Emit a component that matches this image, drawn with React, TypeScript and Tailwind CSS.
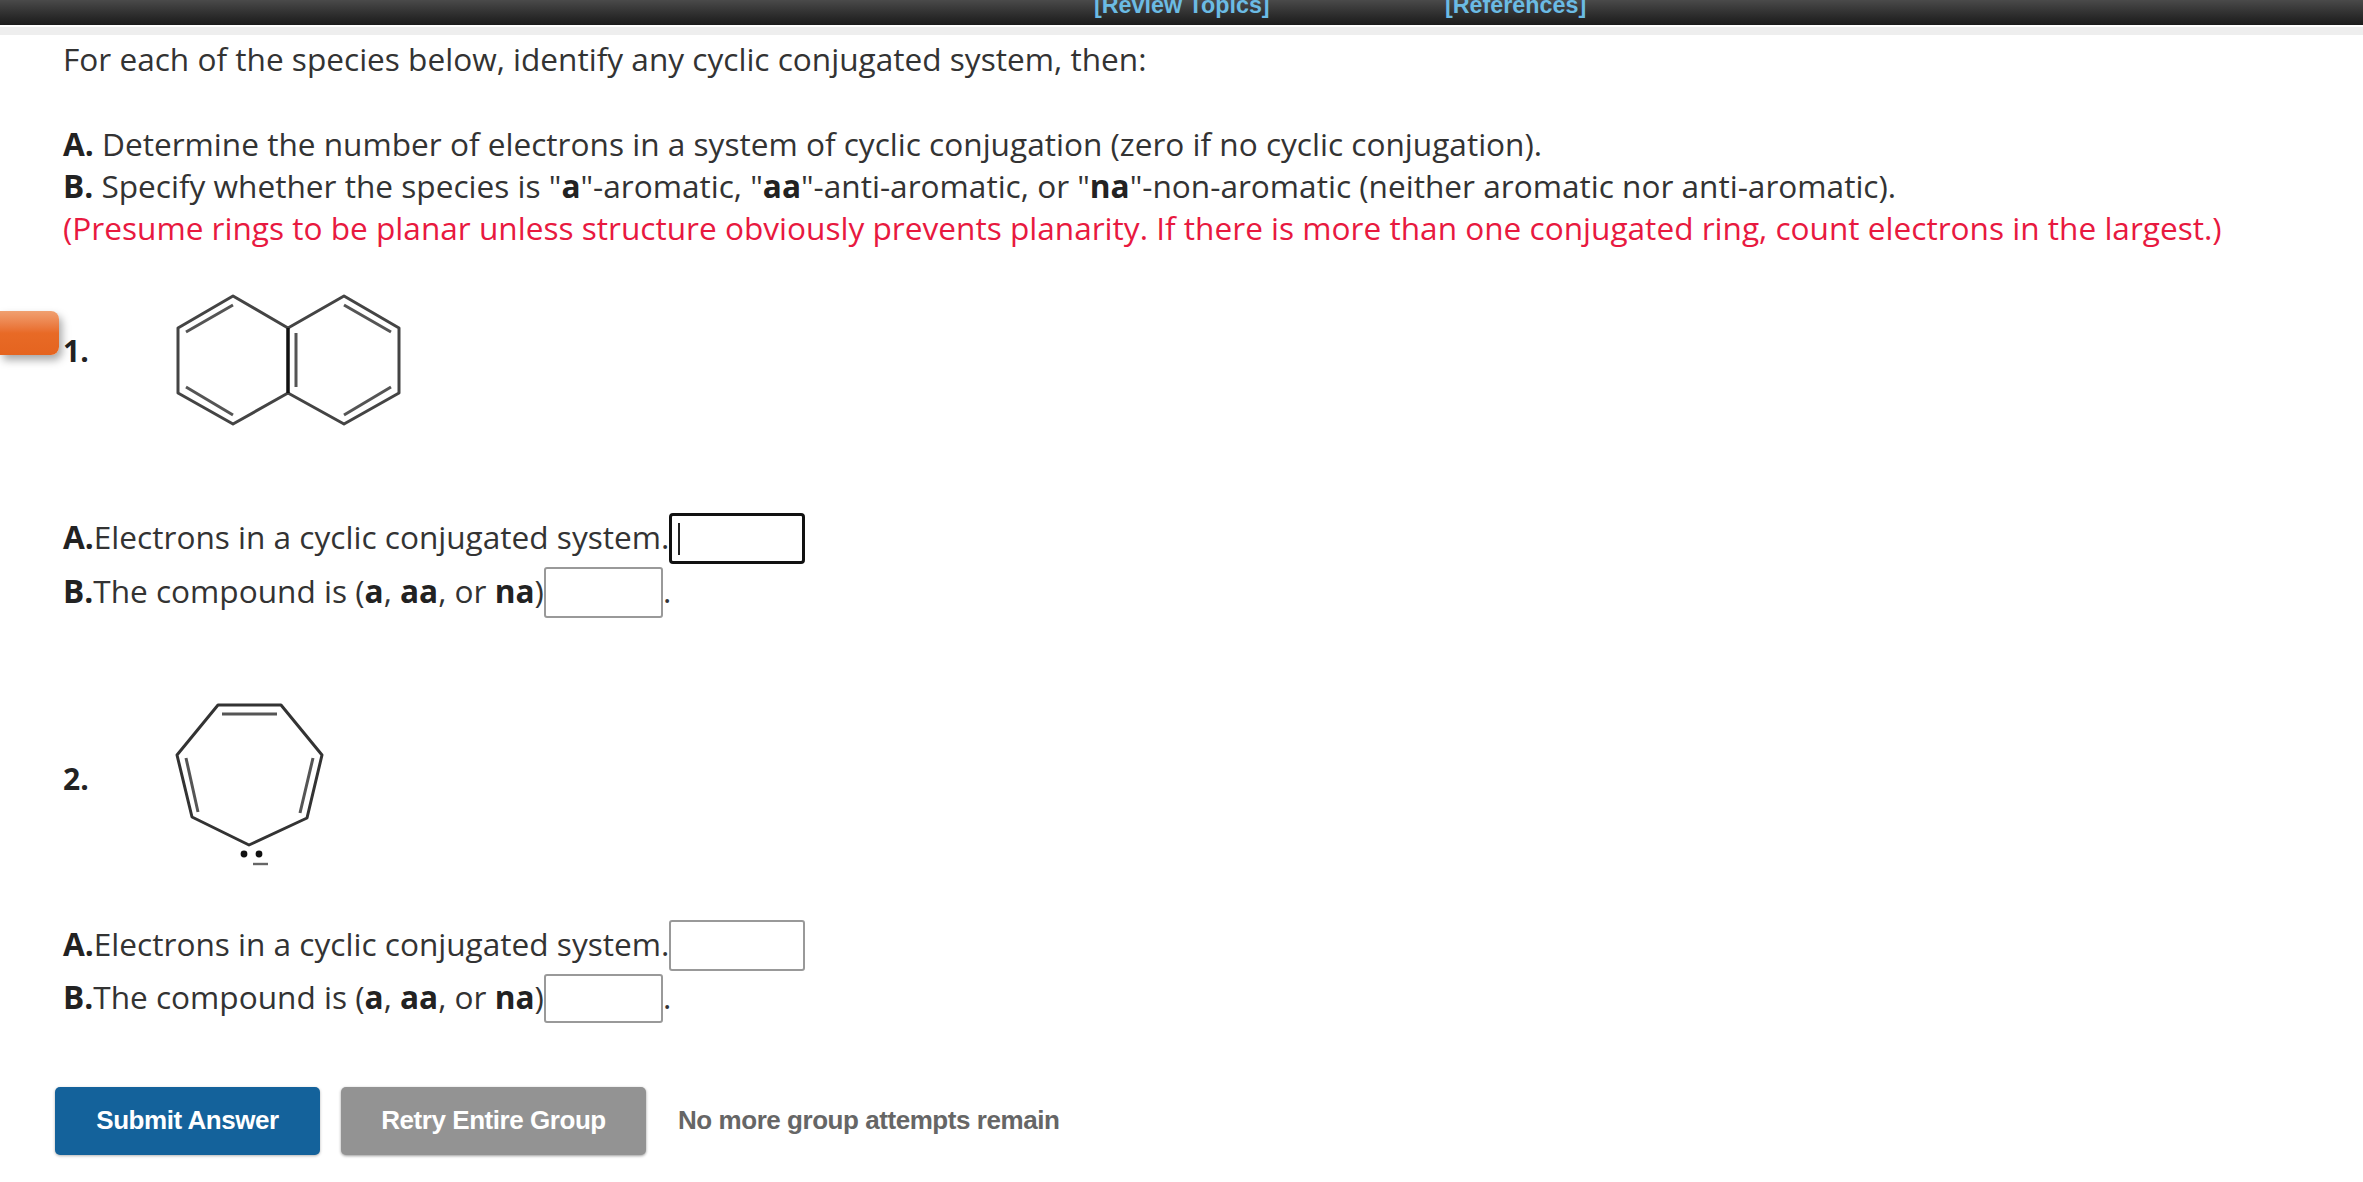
const labelFont = "font-['Open_Sans',sans-serif]"

function Naphthalene() {
  return (
    <svg className="blur-[0.5px]" width="240" height="140" viewBox="170 290 240 140" fill="none" stroke="#444" strokeWidth="3" strokeLinejoin="round">
      <path d="M233 296 L178 328 V393 L233 424 L288 393 V328 Z" />
      <path d="M288 328 L344 296 L399 328 V393 L344 424 L288 393" />
      <path d="M288 328 V393" stroke="#111" strokeWidth="3.2" />
      <path d="M186 332 L233 305 M186 387 L233 415 M296 333 V387 M344 305 L391 332 M391 387 L344 415" stroke="#555" />
    </svg>
  )
}

function Cycloheptatrienyl() {
  return (
    <svg className="blur-[0.5px]" width="170" height="170" viewBox="170 700 170 170" fill="none" stroke="#333" strokeWidth="3" strokeLinejoin="round">
      <path d="M218 705 H281 L322 755 L307 818 L249 845 L192 817 L177 755 Z" />
      <path d="M222 714 H277 M313 758 L300 813 M186 758 L198 812" stroke="#555" />
      <circle cx="244" cy="854" r="3.4" fill="#111" stroke="none" />
      <circle cx="259" cy="854" r="3.4" fill="#111" stroke="none" />
      <path d="M253 864 H268" stroke="#666" strokeWidth="2.4" />
    </svg>
  )
}

function AnswerRows({ active, rowClass }: { active?: boolean; rowClass: string }) {
  return (
    <div className="flex flex-col gap-[3px] text-[#333] whitespace-nowrap">
      <div className="flex items-center h-[51px]">
        <span className="pb-[3px]"><b className="text-[#222]">A.</b>Electrons in a cyclic conjugated system.</span>
        <div
          className={
            active
              ? 'w-[136px] h-[51px] border-[3px] border-[#111] rounded-[4px] bg-white flex items-center pl-[6px]'
              : 'w-[136px] h-[51px] border-2 border-[#999] rounded-[3px] bg-white'
          }
        >
          {active && <div className="w-[2px] h-[32px] bg-[#222]" />}
        </div>
      </div>
      <div className={`flex items-center ${rowClass}`}>
        <span className="pb-[4px]"><b className="text-[#222]">B.</b>The compound is (<b className="text-[#222]">a</b>, <b className="text-[#222]">aa</b>, or <b className="text-[#222]">na</b>)</span>
        <div className={`w-[119px] border-2 border-[#999] rounded-[3px] bg-white ${rowClass}`} />
        <span className="pb-[4px]">.</span>
      </div>
    </div>
  )
}

export default function App() {
  return (
    <div className={`relative w-[2363px] h-[1182px] bg-white overflow-hidden ${labelFont}`}>
      <div className="h-[25px] bg-gradient-to-b from-[#4a4a4a] to-[#1b1b1b] overflow-hidden relative font-['Liberation_Sans',sans-serif] font-bold text-[23.3px] text-[#6bbbe4] leading-[25px]">
        <span className="absolute left-[1094px] -top-[7px] whitespace-nowrap">[Review Topics]</span>
        <span className="absolute left-[1445px] -top-[7px] whitespace-nowrap">[References]</span>
      </div>
      <div className="h-[2px] bg-white" />
      <div className="h-[8px] bg-[#eeeeee]" />

      <div className="pl-[63px] pt-[3px] text-[31.6px] leading-[42px] text-[#333]">
        <p>For each of the species below, identify any cyclic conjugated system, then:</p>
        <p className="mt-[43px]"><b className="text-[#222]">A.</b> Determine the number of electrons in a system of cyclic conjugation (zero if no cyclic conjugation).</p>
        <p><b className="text-[#222]">B.</b> Specify whether the species is "<b className="text-[#222]">a</b>"-aromatic, "<b className="text-[#222]">aa</b>"-anti-aromatic, or "<b className="text-[#222]">na</b>"-non-aromatic (neither aromatic nor anti-aromatic).</p>
        <p className="text-[#e8193f]">(Presume rings to be planar unless structure obviously prevents planarity. If there is more than one conjugated ring, count electrons in the largest.)</p>

        <div className="flex mt-[41px] h-[140px]">
          <b className="w-[107px] mt-[40px] text-[#222] text-[30px]">1.</b>
          <Naphthalene />
        </div>
        <div className="mt-[83px]">
          <AnswerRows active rowClass="h-[51px]" />
        </div>

        <div className="flex mt-[82px] h-[170px]">
          <b className="w-[107px] mt-[58px] text-[#222] text-[30px]">2.</b>
          <Cycloheptatrienyl />
        </div>
        <div className="mt-[50px]">
          <AnswerRows rowClass="h-[49px]" />
        </div>

        <div className="flex items-center mt-[64px] -ml-[8px] font-['Liberation_Sans',sans-serif] font-bold text-[26px] tracking-[-0.45px]">
          <div className="w-[265px] h-[68px] pb-[3px] rounded-[5px] bg-[#14629b] text-white flex items-center justify-center shadow-[0_1px_3px_rgba(0,0,0,0.3)]">Submit Answer</div>
          <div className="ml-[21px] w-[305px] h-[68px] pb-[3px] rounded-[5px] bg-[#939393] text-white flex items-center justify-center shadow-[0_1px_3px_rgba(0,0,0,0.4)]">Retry Entire Group</div>
          <span className="ml-[32px] pb-[3px] text-[#666]">No more group attempts remain</span>
        </div>
      </div>

      {/* orange tab sticking out over the page edge */}
      <div className="absolute left-0 top-[311px] w-[59px] h-[44px] rounded-r-[8px] bg-gradient-to-b from-[#f0a070] via-[#e86a26] to-[#e5641f] shadow-[3px_5px_8px_rgba(0,0,0,0.35)]" />
    </div>
  )
}
